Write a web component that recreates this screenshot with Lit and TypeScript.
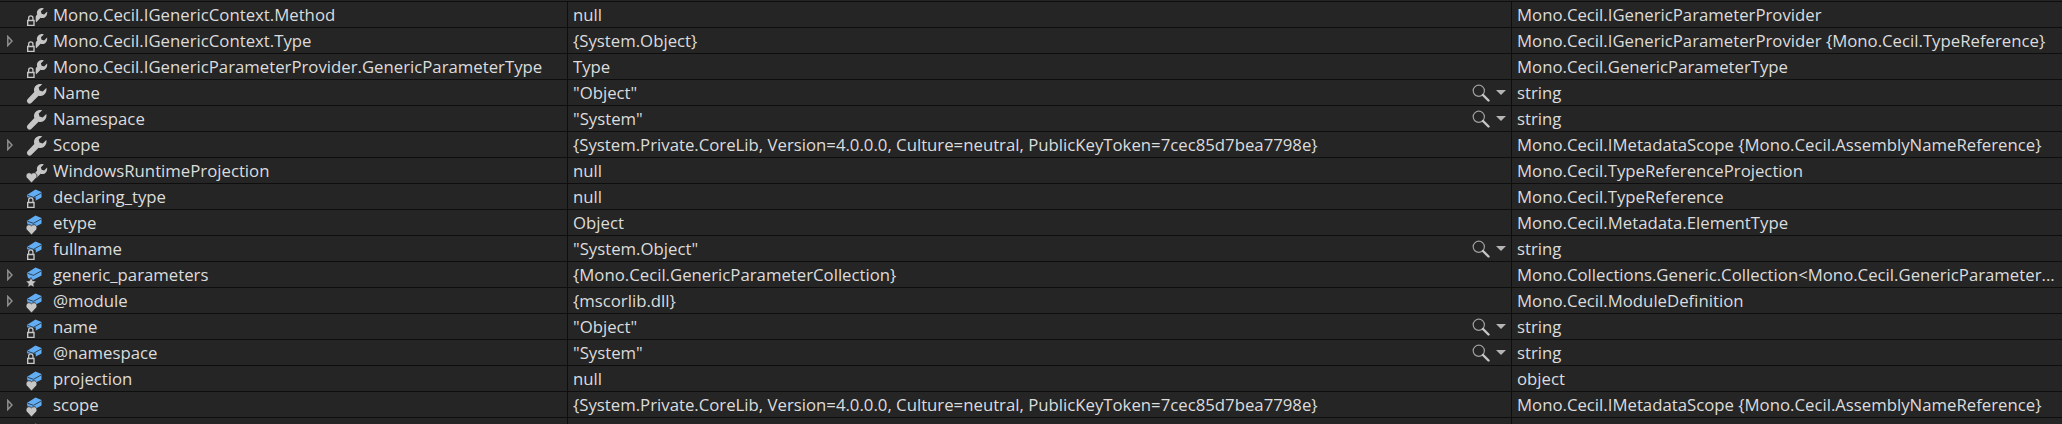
import { LitElement, html, css, svg } from "lit";
import { customElement } from "lit/decorators.js";

type Row = { n: string; v: string; t: string; ic: string; exp?: boolean; viz?: boolean };

const scopeV = "{System.Private.CoreLib, Version=4.0.0.0, Culture=neutral, PublicKeyToken=7cec85d7bea7798e}";
const scopeT = "Mono.Cecil.IMetadataScope {Mono.Cecil.AssemblyNameReference}";

const rows: Row[] = [
  { n: "Mono.Cecil.IGenericContext.Method", v: "null", t: "Mono.Cecil.IGenericParameterProvider", ic: "wl" },
  { n: "Mono.Cecil.IGenericContext.Type", v: "{System.Object}", t: "Mono.Cecil.IGenericParameterProvider {Mono.Cecil.TypeReference}", ic: "wl", exp: true },
  { n: "Mono.Cecil.IGenericParameterProvider.GenericParameterType", v: "Type", t: "Mono.Cecil.GenericParameterType", ic: "wl" },
  { n: "Name", v: '"Object"', t: "string", ic: "w", viz: true },
  { n: "Namespace", v: '"System"', t: "string", ic: "w", viz: true },
  { n: "Scope", v: scopeV, t: scopeT, ic: "w", exp: true },
  { n: "WindowsRuntimeProjection", v: "null", t: "Mono.Cecil.TypeReferenceProjection", ic: "wh" },
  { n: "declaring_type", v: "null", t: "Mono.Cecil.TypeReference", ic: "fl" },
  { n: "etype", v: "Object", t: "Mono.Cecil.Metadata.ElementType", ic: "fh" },
  { n: "fullname", v: '"System.Object"', t: "string", ic: "fl", viz: true },
  { n: "generic_parameters", v: "{Mono.Cecil.GenericParameterCollection}", t: "Mono.Collections.Generic.Collection<Mono.Cecil.GenericParameter...", ic: "fs", exp: true },
  { n: "@module", v: "{mscorlib.dll}", t: "Mono.Cecil.ModuleDefinition", ic: "fh", exp: true },
  { n: "name", v: '"Object"', t: "string", ic: "fl", viz: true },
  { n: "@namespace", v: '"System"', t: "string", ic: "fl", viz: true },
  { n: "projection", v: "null", t: "object", ic: "fh" },
  { n: "scope", v: scopeV, t: scopeT, ic: "fh", exp: true },
  { n: "", v: "", t: "", ic: "fh" },
];

const GRAY = "#c6c6c6";
const BG = "#252526";

const wrench = svg`<path d="M14.500 3c-3.500-.2-6.500 2.500-6.500 6 0 .7.1 1.300.3 1.900L1.500 18.200a2.700 2.700 0 0 0 3.800 3.800l7.300-7.300c.6.2 1.200.3 1.900.3 3.500 0 6-3 6-6.500 0-.5 0-1-.2-1.400l-3.600 3.400-3.200-.9-.8-3.100 3.600-3.200z" fill="${GRAY}"/>`;
const wrenchSmall = svg`<path d="M16.500 5c-3-.2-5.600 2-5.600 5 0 .6.1 1.100.3 1.600L7 16l3.300 3.200 4.300-4.400c.5.2 1.100.3 1.700.3 2.900 0 4.900-2.500 4.900-5.400 0-.4 0-.8-.1-1.100l-3 2.800-2.500-.7-.7-2.500 3-2.700z" fill="${GRAY}"/>`;
const field = svg`<path d="M.8 10 9.500 4.500 15.500 7V12.500L7 17 2 15z" fill="#62aef5"/><path d="M1.500 10.300 7.500 12.300 15.500 7.800" fill="none" stroke="${BG}" stroke-width=".8"/>`;
const lock = svg`<path d="M0 12.500H9.700V23H0z" fill="${BG}"/><path d="M1 23V16.800H2V15a2.800 2.800 0 0 1 5.600 0V16.800H8.700V23zM3.300 16.800H6.300V15a1.500 1.500 0 0 0-3 0zM2.400 18.200V21.700H7.300V18.200z" fill="${GRAY}" fill-rule="evenodd"/>`;
const heart = svg`<path d="M5.500 24 .6 18.700C-.8 16.800.6 13.700 3 13.700c1 0 1.900.4 2.500 1.100.6-.7 1.500-1.100 2.500-1.100 2.400 0 3.800 3.100 2.400 5z" fill="${GRAY}" stroke="${BG}" stroke-width=".8"/>`;
const star = svg`<path d="M5 14.500l1.600 3.200 3.500.5-2.500 2.500.6 3.500L5 22.600l-3.200 1.600.6-3.500L-.1 18.200l3.500-.5z" fill="${GRAY}" stroke="${BG}" stroke-width=".6"/>`;

const iconBody: Record<string, unknown> = {
  w: wrench,
  wl: svg`${wrenchSmall}${lock}`,
  wh: svg`${wrenchSmall}${heart}`,
  fl: svg`${field}${lock}`,
  fh: svg`${field}${heart}`,
  fs: svg`${field}${star}`,
};

@customElement("app-root")
export class AppRoot extends LitElement {
  static styles = css`
    :host { display: block; width: 2062px; height: 424px; overflow: hidden; background: #252526; }
    .grid { display: flex; flex-direction: column; padding-top: 1px; font: 16.75px "Open Sans", "Noto Sans", sans-serif; color: #dcdcdc; }
    .row { display: grid; grid-template-columns: 567px 944px 551px; height: 26px; flex: none; box-sizing: border-box; border-top: 1px solid #0e0e0e; }
    .cell { display: flex; align-items: center; height: 25px; min-width: 0; white-space: nowrap; overflow: hidden; }
    .n { padding-left: 7px; }
    .v, .t { border-left: 1px solid #0e0e0e; padding-left: 5px; }
    .txt { flex: 1; min-width: 0; overflow: hidden; }
    .arrow { width: 6px; height: 12px; flex: none; margin-right: 13px; }
    .ico { width: 21px; height: 24px; flex: none; margin-right: 6px; overflow: visible; }
    .viz { display: flex; align-items: center; gap: 6px; flex: none; margin-right: 5px; }
    .mag { width: 18px; height: 18px; }
    .car { width: 10px; height: 5px; }
  `;

  render() {
    return html`<div class="grid">
      ${rows.map(
        (r) => html`<div class="row">
          <div class="cell n">
            <svg class="arrow" viewBox="0 0 6 12">
              ${r.exp ? svg`<path d="M.8 1.500 5 6 .8 10.500z" fill="none" stroke="#8e8e8e" stroke-width="1.500"/>` : ""}
            </svg>
            <svg class="ico" viewBox="0 0 21 24">${iconBody[r.ic]}</svg>
            <span>${r.n}</span>
          </div>
          <div class="cell v">
            <span class="txt">${r.v}</span>
            ${r.viz
              ? html`<span class="viz">
                  <svg class="mag" viewBox="0 0 18 18">
                    <circle cx="6.800" cy="6.800" r="5.600" fill="none" stroke="#a0a0a0" stroke-width="1.200"/>
                    <path d="M11 11 16.500 16.500" stroke="${GRAY}" stroke-width="2.400" stroke-linecap="round"/>
                  </svg>
                  <svg class="car" viewBox="0 0 10 5"><path d="M0 0h10L5 5z" fill="#b4b4b4"/></svg>
                </span>`
              : ""}
          </div>
          <div class="cell t"><span>${r.t}</span></div>
        </div>`
      )}
    </div>`;
  }
}
